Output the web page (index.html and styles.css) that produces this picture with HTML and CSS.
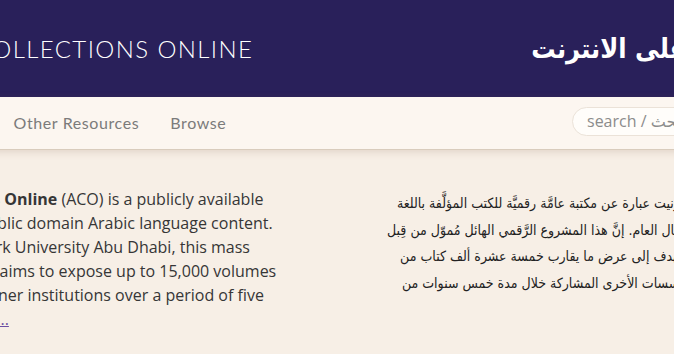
FILE: index.html
```html
<!DOCTYPE html>
<html lang="en">
<head>
<meta charset="utf-8">
<title>Arabic Collections Online</title>
<link rel="stylesheet" href="styles.css">
</head>
<body>
<div class="page">
  <header class="masthead">
    <h1 class="title-en">ARABIC COLLECTIONS ONLINE</h1>
    <h1 class="title-ar" lang="ar" dir="rtl">المجموعات العربية على الانترنت</h1>
  </header>
  <nav class="navbar">
    <ul class="nav-links">
      <li><a href="#">Home</a></li>
      <li><a href="#">About</a></li>
      <li><a href="#">Other Resources</a></li>
      <li><a href="#">Browse</a></li>
    </ul>
    <form class="search">
      <input class="search-input" type="text" placeholder="search / بحث">
    </form>
  </nav>
  <main class="content">
    <p class="intro-en"><strong>Arabic Collections Online</strong> (ACO) is a publicly available digital library of public domain Arabic language content. Funded by New York University Abu Dhabi, this mass digitization project aims to expose up to 15,000 volumes from NYU and partner institutions over a period of five years. <a href="#">Learn more ...</a></p>
    <p class="intro-ar" lang="ar" dir="rtl">
      <span class="ln">المجموعات العربية على الانترنيت عبارة عن مكتبة عامَّة رقميَّة للكتب المؤلَّفة باللغة</span>
      <span class="ln">العربية المتاحة للجميع في مجال العام. إنَّ هذا المشروع الرَّقمي الهائل مُموّل من قِبل</span>
      <span class="ln">جامعة نيويورك أبوظبي وهو يهدف إلى عرض ما يقارب خمسة عشرة ألف كتاب من</span>
      <span class="ln">مكتبات جامعة نيويورك والمؤسسات الأخرى المشاركة خلال مدة خمس سنوات من</span>
      <span class="ln">الزمن. <a href="#">المزيد…</a></span>
    </p>
  </main>
</div>
</body>
</html>
```
FILE: styles.css
```css
html, body {
  margin: 0;
  padding: 0;
}
body {
  background: #f7efe6;
  overflow: hidden;
  font-family: "Open Sans", "DejaVu Sans", sans-serif;
}
.page {
  width: 1010px;
  margin-left: -168px;
}
.masthead {
  background: #29205a;
  height: 97px;
  display: flex;
  align-items: center;
  justify-content: space-between;
  padding: 0 43px;
}
.title-en {
  margin: 0;
  font-family: Lato, sans-serif;
  font-weight: 300;
  font-size: 24px;
  letter-spacing: 1.4px;
  color: #ffffff;
}
.title-ar {
  margin: 0 -117px 0 0;
  font-family: "DejaVu Sans Condensed", "DejaVu Sans", sans-serif;
  font-weight: 700;
  font-size: 27px;
  color: #ffffff;
}
.navbar {
  background: #fcf6f0;
  height: 52px;
  border-bottom: 1px solid #d9ccbd;
  box-shadow: 0 2px 8px rgba(120, 90, 60, 0.18);
  display: flex;
  align-items: center;
  justify-content: space-between;
  padding: 0 22px 0 28px;
  position: relative;
}
.nav-links {
  list-style: none;
  margin: 0;
  padding: 0;
  display: flex;
  gap: 31px;
}
.nav-links a {
  font-family: Lato, sans-serif;
  font-size: 16px;
  letter-spacing: 0.6px;
  color: #7b7b7b;
  text-decoration: none;
}
.search {
  margin: 0 0 4px 0;
}
.search-input {
  box-sizing: border-box;
  width: 248px;
  height: 29px;
  border: 1px solid #ebe2d8;
  border-radius: 15px;
  background: #fffdfa;
  padding: 0 14px;
  font-family: "Open Sans", "DejaVu Sans", sans-serif;
  font-size: 16px;
  color: #888;
}
.search-input::placeholder {
  color: #8c8c8c;
}
.content {
  display: grid;
  grid-template-columns: 444px 441px;
  column-gap: 85px;
  padding: 37px 0 0 25px;
}
.intro-en {
  margin: 0;
  font-size: 16px;
  line-height: 24px;
  color: #363636;
}
.intro-en strong {
  font-weight: 700;
}
.intro-en a {
  color: #6c4fa3;
}
.intro-ar {
  margin: 3px 0 0;
  font-family: "DejaVu Sans Condensed", "DejaVu Sans", sans-serif;
  font-size: 14px;
  line-height: 26.5px;
  color: #222;
}
.intro-ar .ln {
  display: block;
  white-space: nowrap;
}
.intro-ar a {
  color: #6c4fa3;
}
```
